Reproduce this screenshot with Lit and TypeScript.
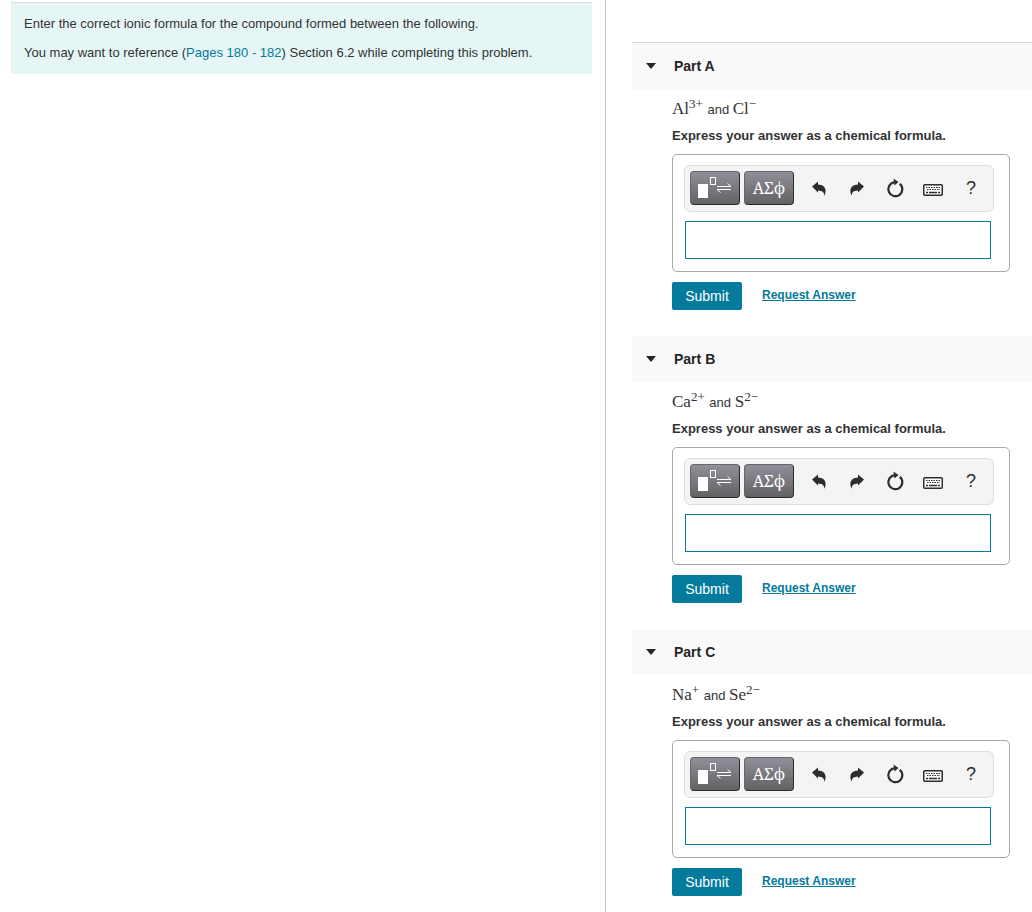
import { LitElement, html, css, svg } from "lit";
import { customElement, property, state } from "lit/decorators.js";

interface Ion {
  symbol: string;
  charge: string;
}

interface Part {
  letter: string;
  ions: [Ion, Ion];
}

const PARTS: Part[] = [
  { letter: "A", ions: [{ symbol: "Al", charge: "3+" }, { symbol: "Cl", charge: "−" }] },
  { letter: "B", ions: [{ symbol: "Ca", charge: "2+" }, { symbol: "S", charge: "2−" }] },
  { letter: "C", ions: [{ symbol: "Na", charge: "+" }, { symbol: "Se", charge: "2−" }] },
];

const curvedArrow = svg`<path d="M0 5.5 6 0.500v3c4.600 0.300 7.600 2.500 7.600 6.200 0 1.900-0.500 3.600-1.300 5.100 0-3.400-1.700-5.100-6.300-5.300v2z" />`;

@customElement("answer-editor")
export class AnswerEditor extends LitElement {
  @property() label = "";
  @state() private value = "";

  static styles = css`
    :host {
      display: block;
      padding: 10px 15px 12px 11px;
      border: 1px solid #a9a9a9;
      border-radius: 5px;
    }
    .toolbar {
      display: flex;
      align-items: flex-start;
      gap: 4px;
      height: 47px;
      box-sizing: border-box;
      padding: 5px 3px 5px 5px;
      background: #f4f4f4;
      border: 1px solid #dedede;
      border-radius: 6px;
    }
    button {
      margin: 0;
      padding: 0;
      font: inherit;
      cursor: pointer;
    }
    .palette {
      display: flex;
      align-items: center;
      justify-content: center;
      width: 50px;
      height: 34px;
      border: 1px solid #2b2b2b;
      border-top-color: #66666a;
      border-left-color: #66666a;
      border-radius: 4px;
      background: linear-gradient(#918f99, #626264);
      color: #fff;
    }
    .greek {
      font: 16px/32px "Noto Serif", "DejaVu Serif", "Liberation Serif", serif;
      font-size: 16px;
    }
    .tools {
      display: flex;
      flex: 1;
      justify-content: space-between;
      padding-left: 2px;
    }
    .tool {
      display: flex;
      align-items: center;
      justify-content: center;
      width: 38px;
      height: 34px;
      border: 0;
      background: none;
      color: #2d2d2d;
    }
    .help {
      font-size: 18px;
    }
    .icon {
      display: block;
      fill: currentColor;
    }
    .answer {
      display: block;
      box-sizing: border-box;
      width: calc(100% - 4px);
      height: 38px;
      margin: 9px 0 0 1px;
      padding: 0 8px;
      border: 1px solid #047a9c;
      border-radius: 0;
      background: #fff;
      font: 16px "Liberation Serif", serif;
      outline: none;
    }
  `;

  render() {
    return html`
      <div class="toolbar" role="toolbar" aria-label="Formula tools">
        <button class="palette" type="button" aria-label="Templates">
          <svg class="icon" width="34" height="24" viewBox="0 0 34 24">
            <rect x="0" y="8" width="10" height="14" />
            <rect x="12.500" y="1.500" width="5" height="7" fill="none" stroke="#fff" />
            <path d="M19 10.500h14L29.500 7.500" fill="none" stroke="#fff" />
            <path d="M33 13.500H19l3.500 3" fill="none" stroke="#fff" />
          </svg>
        </button>
        <button class="palette greek" type="button" aria-label="Symbols">ΑΣϕ</button>
        <div class="tools">
          <button class="tool" type="button" aria-label="Undo">
            <svg class="icon" width="14" height="15" viewBox="0 0 14 15">${curvedArrow}</svg>
          </button>
          <button class="tool" type="button" aria-label="Redo">
            <svg class="icon" width="14" height="15" viewBox="0 0 14 15">
              <g transform="matrix(-1 0 0 1 14 0)">${curvedArrow}</g>
            </svg>
          </button>
          <button class="tool" type="button" aria-label="Reset">
            <svg class="icon" width="18" height="20" viewBox="0 0 18 20">
              <path d="M13.800 5.800A7 7 0 1 1 8 4.300" fill="none" stroke="currentColor" stroke-width="2.200" />
              <path d="M7.500 0.500 12.500 4 8.500 7.500z" />
            </svg>
          </button>
          <button class="tool" type="button" aria-label="Keyboard">
            <svg class="icon" width="20" height="16" viewBox="0 -1 20 16">
              <rect x="0.750" y="3.750" width="18.500" height="10.500" rx="1" fill="#fff" stroke="currentColor" stroke-width="1.500" />
              <path d="M3 6.500h14M4 8.500h13" fill="none" stroke="currentColor" stroke-dasharray="1.500 1" />
              <path d="M3 11.500h2M6 11.500h8M15 11.500h2" fill="none" stroke="currentColor" stroke-width="1.500" />
            </svg>
          </button>
          <button class="tool help" type="button" aria-label="Help">?</button>
        </div>
      </div>
      <input
        class="answer"
        type="text"
        aria-label=${this.label}
        .value=${this.value}
        @input=${(e: Event) => (this.value = (e.target as HTMLInputElement).value)}
      />
    `;
  }
}

@customElement("problem-part")
export class ProblemPart extends LitElement {
  @property({ attribute: false }) part!: Part;
  @state() private open = true;

  static styles = css`
    :host {
      display: block;
    }
    .heading {
      margin: 0;
      font-size: 14px;
    }
    .toggle {
      display: flex;
      align-items: center;
      gap: 18px;
      width: 100%;
      height: 46px;
      margin: 0;
      padding: 0 14px;
      border: 0;
      background: #f9f9f9;
      color: #252525;
      font: bold 14px/18px "Liberation Sans", Arial, sans-serif;
      cursor: pointer;
    }
    .arrow {
      display: block;
      fill: #252525;
    }
    .closed {
      transform: rotate(-90deg);
    }
    .body {
      padding: 10px 22px 26px 40px;
    }
    .ions {
      margin: 0;
      line-height: 20px;
    }
    .ion {
      font-family: "Liberation Serif", serif;
      font-size: 17px;
    }
    .charge {
      margin-right: 1px;
      font-size: 13px;
      line-height: 0;
      vertical-align: 6px;
    }
    .hint {
      margin: 6px 0 8px;
      font-weight: bold;
      line-height: 20px;
    }
    .actions {
      display: flex;
      align-items: flex-start;
      gap: 20px;
      margin-top: 10px;
    }
    .submit {
      width: 70px;
      height: 28px;
      padding: 0;
      border: 0;
      border-radius: 2px;
      background: #047a9c;
      color: #fff;
      font: 14px/28px "Liberation Sans", Arial, sans-serif;
      cursor: pointer;
    }
    .request {
      color: #047a9c;
      font-size: 12px;
      font-weight: bold;
      line-height: 26px;
    }
  `;

  private ion({ symbol, charge }: Ion) {
    return html`<span class="ion">${symbol}<sup class="charge">${charge}</sup></span>`;
  }

  render() {
    const { letter, ions } = this.part;
    return html`
      <h2 class="heading">
        <button class="toggle" type="button" aria-expanded=${this.open} @click=${() => (this.open = !this.open)}>
          <svg class="arrow ${this.open ? "" : "closed"}" width="10" height="6" viewBox="0 0 10 6">
            <path d="M0 0h10L5 6z" />
          </svg>
          Part ${letter}
        </button>
      </h2>
      ${this.open
        ? html`<div class="body">
            <p class="ions">${this.ion(ions[0])} and ${this.ion(ions[1])}</p>
            <p class="hint">Express your answer as a chemical formula.</p>
            <answer-editor label="Answer for part ${letter}"></answer-editor>
            <div class="actions">
              <button class="submit" type="button">Submit</button>
              <a class="request" href="#">Request Answer</a>
            </div>
          </div>`
        : ""}
    `;
  }
}

@customElement("app-root")
export class AppRoot extends LitElement {
  static styles = css`
    :host {
      display: grid;
      grid-template-columns: 606fr 426fr;
      min-height: 100vh;
      background: #fff;
      color: #333;
      font: 13px/20px "Liberation Sans", Arial, sans-serif;
    }
    .intro {
      padding: 2px 13px 0 11px;
      border-right: 1px solid #b9c2cf;
    }
    .prompt {
      padding: 11px 13px;
      border-top: 1px solid #dcdfe0;
      background: #e6f6f7;
    }
    .line {
      margin: 0;
    }
    .line + .line {
      margin-top: 9px;
    }
    .pages {
      color: #047a9c;
      text-decoration: none;
    }
    .parts {
      height: 100vh;
      box-sizing: border-box;
      padding: 42px 0 0 26px;
      overflow: hidden;
    }
    .list {
      border-top: 1px solid #dcdcdc;
    }
  `;

  render() {
    return html`
      <section class="intro">
        <div class="prompt">
          <p class="line">Enter the correct ionic formula for the compound formed between the following.</p>
          <p class="line">
            You may want to reference (<a class="pages" href="#">Pages 180 - 182</a>) Section 6.2 while completing
            this problem.
          </p>
        </div>
      </section>
      <main class="parts">
        <div class="list">${PARTS.map((part) => html`<problem-part .part=${part}></problem-part>`)}</div>
      </main>
    `;
  }
}
